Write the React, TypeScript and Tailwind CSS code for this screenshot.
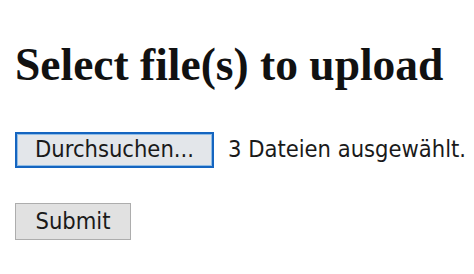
import React from "react";

const ui = { fontFamily: '"DejaVu Sans Condensed", "DejaVu Sans", Tahoma, sans-serif' };

export default function App() {
  return (
    <div className="min-h-[274px] w-[474px] bg-white px-[15px] pt-[38px]">
      <h1
        className="whitespace-nowrap text-[45.5px] font-bold leading-[53px] text-[#111]"
        style={{ fontFamily: '"Liberation Serif", "Times New Roman", serif' }}
      >
        Select file(s) to upload
      </h1>

      <form className="mt-[41px] flex flex-col items-start" style={ui}>
        <div className="flex items-center gap-[14px]">
          <button
            type="button"
            className="flex h-[36px] w-[199px] items-center justify-center border-2 border-[#1565c0] bg-[#e3e6ea] text-[23.5px] text-[#1a1a1a] shadow-[inset_0_0_0_1px_#8fbce6]"
          >
            Durchsuchen...
          </button>
          <span className="whitespace-nowrap text-[23.5px] text-[#1a1a1a]">3 Dateien ausgewählt.</span>
        </div>

        <button
          type="submit"
          className="mt-[35px] flex h-[37px] w-[116px] items-center justify-center border border-[#adadad] bg-[#e1e1e1] text-[23.5px] text-[#1a1a1a]"
        >
          Submit
        </button>
      </form>
    </div>
  );
}
